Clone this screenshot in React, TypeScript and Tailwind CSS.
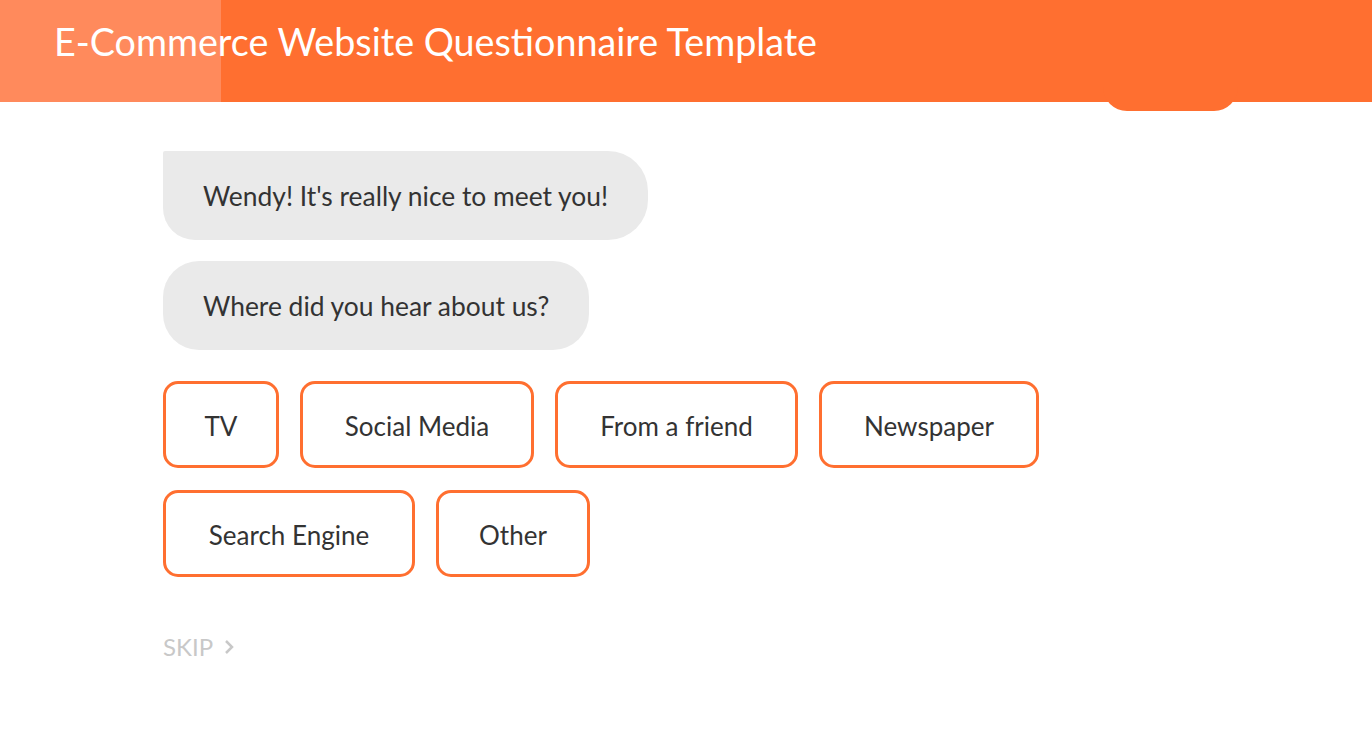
import React from "react";

const options1 = [
  { label: "TV", w: "w-[116px]" },
  { label: "Social Media", w: "w-[234px]" },
  { label: "From a friend", w: "w-[243px]" },
  { label: "Newspaper", w: "w-[220px]" },
];
const options2 = [
  { label: "Search Engine", w: "w-[252px]" },
  { label: "Other", w: "w-[154px]" },
];

function Opt({ label, w }: { label: string; w: string }) {
  return (
    <button className={`${w} h-[87px] pt-[2px] flex items-center justify-center border-[3px] border-[#ff6f30] rounded-[15px] bg-white text-[26px] text-[#333333] leading-none`}>
      {label}
    </button>
  );
}

export default function App() {
  return (
    <div className="w-[1372px] h-[756px] bg-white overflow-hidden" style={{ fontFamily: "Lato, 'Noto Sans', sans-serif" }}>
      <div className="relative h-[102px] bg-[#ff6f30] flex">
        <div className="w-[221px] h-full bg-[#ff8a5c]" />
        <h1 className="absolute left-[54px] top-[20px] text-[37.7px] leading-[44px] text-white font-normal">
          E-Commerce Website Questionnaire Template
        </h1>
        <div className="absolute left-[1103px] top-[60px] w-[135px] h-[51px] bg-[#ff6f30] rounded-b-[24px]" />
      </div>
      <div className="pl-[163px] pt-[49px] flex flex-col items-start">
        <div className="h-[89px] px-[40px] pt-[3px] flex items-center bg-[#eaeaea] rounded-tl-[2px] rounded-bl-[32px] rounded-r-[40px] text-[26.4px] text-[#333333]">
          Wendy! It's really nice to meet you!
        </div>
        <div className="mt-[21px] h-[89px] px-[40px] pt-[3px] flex items-center bg-[#eaeaea] rounded-[36px] text-[26.4px] text-[#333333]">
          Where did you hear about us?
        </div>
        <div className="mt-[31px] flex gap-[21px]">
          {options1.map((o) => (
            <Opt key={o.label} label={o.label} w={o.w} />
          ))}
        </div>
        <div className="mt-[22px] flex gap-[21px]">
          {options2.map((o) => (
            <Opt key={o.label} label={o.label} w={o.w} />
          ))}
        </div>
        <div className="mt-[52px] flex items-center gap-[11px] text-[24px] text-[#c8c8c8]">
          <span>SKIP</span>
          <svg width="10" height="16" viewBox="0 0 10 16" fill="none">
            <path d="M2 2l6 6-6 6" stroke="#c8c8c8" strokeWidth="2.5" />
          </svg>
        </div>
      </div>
    </div>
  );
}
